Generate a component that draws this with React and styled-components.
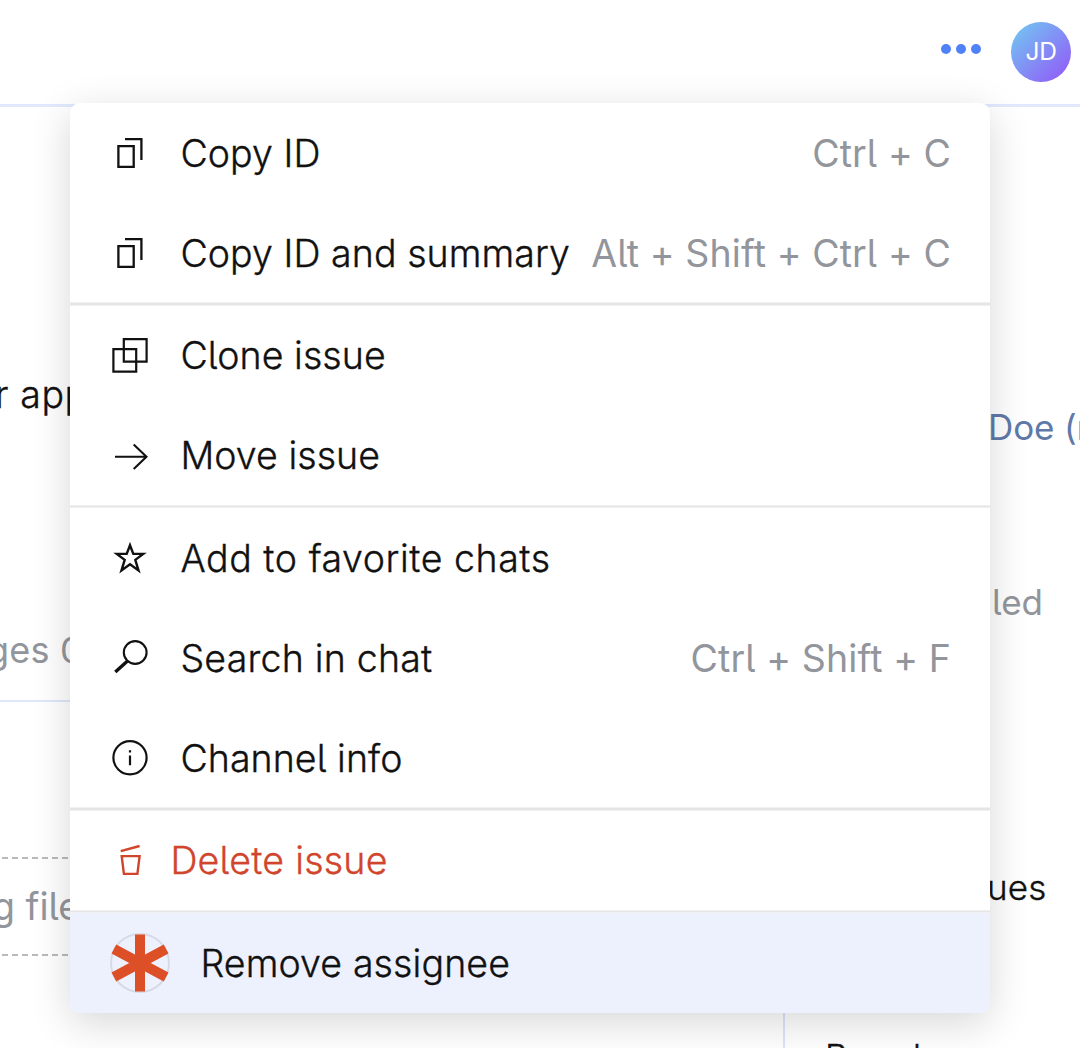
import React from "react";
import styled, { createGlobalStyle } from "styled-components";

const GlobalStyle = createGlobalStyle`
  * {
    box-sizing: border-box;
  }
  body {
    margin: 0;
    background-color: #ffffff;
    font-family: Inter, "Liberation Sans", sans-serif;
    font-feature-settings: "cv05";
    color: #111111;
  }
`;

const Page = styled.div`
  position: relative;
  width: 1080px;
  height: 1048px;
  overflow: hidden;
  display: flex;
  flex-direction: column;
`;

const Header = styled.header`
  flex: none;
  height: 107px;
  padding-right: 9px;
  border-bottom: 3px solid #e2e9fd;
  display: flex;
  justify-content: flex-end;
  align-items: center;
  gap: 30px;
`;

const MoreButton = styled.div`
  display: flex;
  gap: 5px;
  margin-top: -6px;
`;

const Dot = styled.span`
  width: 10px;
  height: 10px;
  border-radius: 50%;
  background-color: #4f82f7;
`;

const Avatar = styled.div`
  width: 60px;
  height: 60px;
  border-radius: 50%;
  background: linear-gradient(135deg, #74c0f2 10%, #8f62f7 88%);
  color: #ffffff;
  font-size: 24.5px;
  letter-spacing: -0.4px;
  line-height: 59px;
  text-align: center;
`;

const Content = styled.div`
  flex: 1;
  display: flex;
  justify-content: space-between;
  min-height: 0;
`;

const Main = styled.main`
  width: 783px;
  display: flex;
  flex-direction: column;
`;

const Side = styled.aside`
  width: 297px;
  border-left: 2px solid #dbe5fb;
  display: flex;
  flex-direction: column;
  white-space: nowrap;
`;

const Text = styled.div`
  flex: none;
  height: 48px;
  line-height: 48px;
  font-size: ${(props) => props.$size || 37.5}px;
  font-weight: ${(props) => (props.$strong ? 300 : 400)};
  -webkit-text-stroke: ${(props) => (props.$strong ? 0.35 : 0)}px;
  letter-spacing: ${(props) => props.$spacing || 0}px;
  color: ${(props) => props.$color || "#111111"};
  margin-top: ${(props) => props.$top}px;
  margin-left: ${(props) => props.$left}px;
  white-space: nowrap;
`;

const Comments = styled.section`
  flex: none;
  height: 28px;
  border-bottom: 2px solid #e1e7fb;
`;

const DropZone = styled.section`
  flex: none;
  height: 99px;
  margin-top: 155px;
  display: flex;
  flex-direction: column;
  justify-content: space-between;
`;

const Dashes = styled.div`
  height: 2px;
  background: repeating-linear-gradient(
    to right,
    #b9b9bb 0 6px,
    transparent 6px 10px
  );
  margin-left: ${(props) => props.$shift}px;
`;

const Menu = styled.ul`
  position: absolute;
  top: 102.5px;
  left: 70px;
  width: 920px;
  margin: 0;
  padding: 0;
  list-style: none;
  border-radius: 10px;
  overflow: hidden;
  background-color: #ffffff;
  box-shadow: 0 10px 42px rgba(0, 0, 0, 0.16);
`;

const Divider = styled.li`
  height: ${(props) => (props.$thick ? 4 : 3)}px;
  margin: ${(props) => (props.$thick ? "-0.5px 0 -1px" : "0 0 -0.5px")};
  border: solid #f1f1f1;
  border-width: 1px 0;
  background-color: #e5e5e5;
`;

const Item = styled.li`
  height: 100px;
  padding: 0 39px 0 40px;
  display: flex;
  align-items: center;
  font-size: 37.5px;
  white-space: nowrap;
  color: ${(props) => (props.$danger ? "#d0452b" : "#111111")};
  background-color: ${(props) => (props.$active ? "#edf1fe" : "transparent")};
`;

const IconBox = styled.span`
  flex: none;
  display: flex;
  width: ${(props) => props.$width || 40}px;
  margin-right: 30.4px;

  svg {
    flex: none;
  }
`;

const Label = styled.span`
  flex: 1;
  padding-top: 1px;
  font-weight: 300;
  -webkit-text-stroke: 0.35px;
  letter-spacing: ${(props) => props.$spacing || 0.07}px;
`;

const Shortcut = styled.span`
  padding-top: 1px;
  letter-spacing: 0.1px;
  color: #92959b;
`;

const Svg = ({ children, size = 40 }) => (
  <svg
    width={size}
    height={size}
    viewBox={`0 0 ${size} ${size}`}
    fill="none"
    stroke="currentColor"
    strokeWidth="2.2"
  >
    {children}
  </svg>
);

const CopyIcon = () => (
  <Svg>
    <path d="M8.4 13.1h15.3v20.8H8.4zM15 6.1h16.4v20.9" strokeWidth="2.3" />
  </Svg>
);

const CloneIcon = () => (
  <Svg>
    <path d="M3.4 14.1h22.8v22.5H3.4zM13.8 4.1h22.8v22.5H13.8z" />
  </Svg>
);

const ArrowIcon = () => (
  <Svg>
    <path d="M5 21.8h31.5M23.7 9.5l12.8 12.3-12.8 12.3" strokeWidth="2.1" />
  </Svg>
);

const StarIcon = () => (
  <Svg>
    <path
      d="M20 7.2l3.3 8.7h9.9l-7.9 6 3.2 10.5-8.5-6.2-8.5 6.2L14.7 21.9l-7.9-6h9.9z"
      strokeWidth="2.4"
    />
  </Svg>
);

const SearchIcon = () => (
  <Svg>
    <circle cx="25.2" cy="14.5" r="11.4" strokeWidth="2.1" />
    <path d="M17.5 23L5.3 34" strokeWidth="3.4" />
  </Svg>
);

const InfoIcon = () => (
  <Svg>
    <circle cx="20" cy="19.7" r="16.6" />
    <path d="M20 17.4v9.8M20 12.2v2.4" strokeWidth="2.2" />
  </Svg>
);

const TrashIcon = () => (
  <Svg>
    <path d="M11.7 16.1h17.9l-2.2 17.8H13.9zM10.7 11.2L29.6 6" strokeWidth="2.4" />
  </Svg>
);

const AsteriskIcon = () => (
  <Svg size={60}>
    <circle cx="30" cy="30" r="29" stroke="#d7dae5" strokeWidth="2" />
    <path
      d="M30 1.5v57M3.9 16l52.2 28M56.1 16l-52.2 28"
      stroke="#dd4f26"
      strokeWidth="10"
    />
  </Svg>
);

const GROUPS = [
  [
    { icon: CopyIcon, label: "Copy ID", shortcut: "Ctrl + C" },
    {
      icon: CopyIcon,
      label: "Copy ID and summary",
      shortcut: "Alt + Shift + Ctrl + C",
    },
  ],
  [
    { icon: CloneIcon, label: "Clone issue" },
    { icon: ArrowIcon, label: "Move issue" },
  ],
  [
    { icon: StarIcon, label: "Add to favorite chats", spacing: 0.55 },
    {
      icon: SearchIcon,
      label: "Search in chat",
      shortcut: "Ctrl + Shift + F",
      spacing: 0.22,
    },
    { icon: InfoIcon, label: "Channel info" },
  ],
  [
    {
      icon: TrashIcon,
      label: "Delete issue",
      danger: true,
      iconWidth: 30,
      spacing: 0.25,
    },
  ],
  [
    {
      icon: AsteriskIcon,
      label: "Remove assignee",
      active: true,
      iconWidth: 60,
      spacing: 0.12,
    },
  ],
];

export default () => (
  <Page>
    <GlobalStyle />
    <Header>
      <MoreButton>
        <Dot />
        <Dot />
        <Dot />
      </MoreButton>
      <Avatar>JD</Avatar>
    </Header>
    <Content>
      <Main>
        <Text $top={264} $left={-5} $spacing={0.6} $strong>
          r app
        </Text>
        <Text $top={207} $left={-13} $size={36} $spacing={0.2} $color="#92959b">
          ges 0
        </Text>
        <Comments />
        <DropZone>
          <Dashes $shift={-8} />
          <Text $top={0} $left={-8} $color="#92959b">
            g files
          </Text>
          <Dashes $shift={2} />
        </DropZone>
      </Main>
      <Side>
        <Text $top={296} $left={203} $size={35} $spacing={-0.1} $color="#5f79a9">
          Doe (r
        </Text>
        <Text $top={127} $left={207} $size={35} $color="#92959b">
          led
        </Text>
        <Text $top={237} $left={202} $size={35} $spacing={0.2} $strong>
          ues
        </Text>
        <Text $top={122} $left={40} $size={35} $strong>
          Board
        </Text>
      </Side>
    </Content>
    <Menu>
      {GROUPS.map((group, index) => (
        <React.Fragment key={index}>
          {index > 0 && <Divider $thick={index % 2 === 1} />}
          {group.map(
            ({ icon: Icon, label, shortcut, danger, active, iconWidth, spacing }) => (
              <Item key={label} $danger={danger} $active={active}>
                <IconBox $width={iconWidth}>
                  <Icon />
                </IconBox>
                <Label $spacing={spacing}>{label}</Label>
                {shortcut && <Shortcut>{shortcut}</Shortcut>}
              </Item>
            )
          )}
        </React.Fragment>
      ))}
    </Menu>
  </Page>
);
